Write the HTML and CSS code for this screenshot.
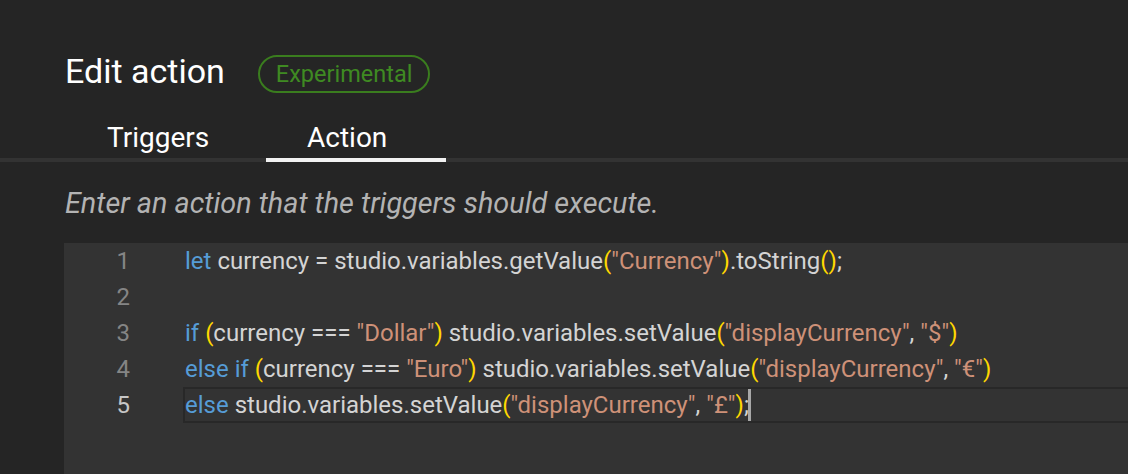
FILE: index.html
```html
<!DOCTYPE html>
<html lang="en">
<head>
    <meta charset="UTF-8">
    <title>Edit action</title>
    <link rel="stylesheet" href="styles.css">
</head>
<body>
    <div class="header">
        <h1 class="title">Edit action</h1>
        <span class="badge">Experimental</span>
    </div>

    <div class="tabs">
        <div class="tab">Triggers</div>
        <div class="tab active">Action</div>
    </div>

    <p class="hint">Enter an action that the triggers should execute.</p>

    <div class="editor">
        <div class="line">
            <span class="num">1</span>
            <span class="code"><span class="kw">let</span> currency = studio.variables.getValue<span class="br">(</span><span class="str">"Currency"</span><span class="br">)</span>.toString<span class="br">()</span>;</span>
        </div>
        <div class="line">
            <span class="num">2</span>
            <span class="code"></span>
        </div>
        <div class="line">
            <span class="num">3</span>
            <span class="code"><span class="kw">if</span> <span class="br">(</span>currency === <span class="str">"Dollar"</span><span class="br">)</span> studio.variables.setValue<span class="br">(</span><span class="str">"displayCurrency"</span>, <span class="str">"$"</span><span class="br">)</span></span>
        </div>
        <div class="line">
            <span class="num">4</span>
            <span class="code"><span class="kw">else if</span> <span class="br">(</span>currency === <span class="str">"Euro"</span><span class="br">)</span> studio.variables.setValue<span class="br">(</span><span class="str">"displayCurrency"</span>, <span class="str">"€"</span><span class="br">)</span></span>
        </div>
        <div class="line current">
            <span class="num">5</span>
            <span class="code"><span class="kw">else</span> studio.variables.setValue<span class="br">(</span><span class="str">"displayCurrency"</span>, <span class="str">"£"</span><span class="br">)</span>;<span class="cursor"></span></span>
        </div>
    </div>
</body>
</html>
```

FILE: styles.css
```css
body {
    margin: 0;
    background-color: #252525;
    font-family: Roboto, "Liberation Sans", sans-serif;
    color: #ffffff;
    height: 474px;
    overflow: hidden;
    display: flex;
    flex-direction: column;
}
.header {
    display: flex;
    align-items: flex-start;
    gap: 33px;
    padding: 51px 0 0 65px;
}
.title {
    margin: 0;
    font-size: 34px;
    font-weight: 400;
    line-height: 40px;
}
.badge {
    margin-top: 4px;
    border: 2px solid #3a7d1e;
    border-radius: 20px;
    color: #3f8a22;
    font-size: 23.5px;
    padding: 3px 16px;
    line-height: 28px;
}
.tabs {
    display: flex;
    gap: 20px;
    padding-left: 66px;
    margin-top: 28px;
    border-bottom: 4px solid #333333;
}
.tab {
    width: 180px;
    box-sizing: border-box;
    padding: 0 0 3px 41px;
    font-size: 28px;
    line-height: 34px;
    margin-bottom: -4px;
    border-bottom: 4px solid transparent;
}
.tab.active {
    border-bottom-color: #f2f2f2;
}
.hint {
    margin: 24px 0 23px 65px;
    font-size: 28.8px;
    font-style: italic;
    color: #b3b3b3;
    line-height: 34px;
}
.editor {
    flex: 1;
    margin-left: 64px;
    background-color: #333333;
    font-size: 24px;
}
.line {
    display: flex;
    height: 36px;
    line-height: 36px;
    color: #d4d4d4;
}
.num {
    width: 66px;
    padding-right: 54px;
    text-align: right;
    color: #858585;
    flex-shrink: 0;
}
.code {
    flex: 1;
    padding-left: 1px;
    white-space: pre;
}
.current .num {
    color: #c6c6c6;
}
.current .code {
    border: 2px solid #282828;
    border-right: none;
    line-height: 32px;
    padding-left: 0;
    margin-left: -1px;
}
.kw {
    color: #569cd6;
}
.str {
    color: #ce9178;
}
.br {
    color: #ffd700;
}
.cursor {
    display: inline-block;
    width: 3px;
    height: 32px;
    background-color: #a8a8a8;
    vertical-align: top;
    margin-left: -1px;
}
```
